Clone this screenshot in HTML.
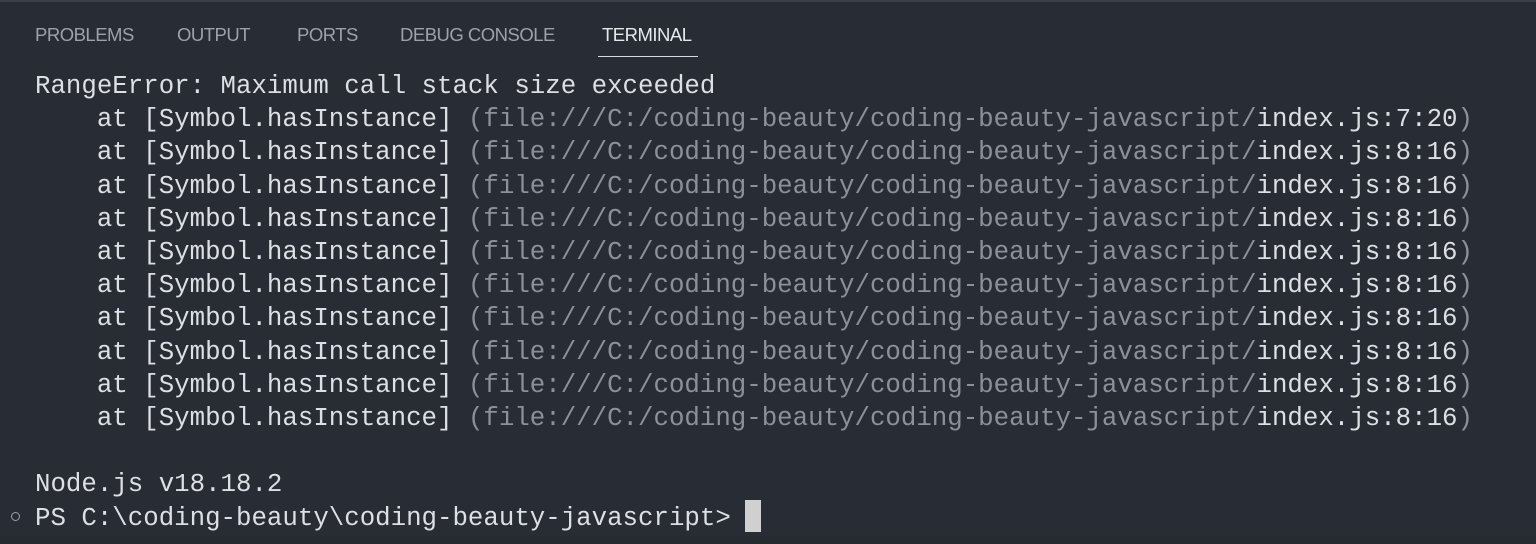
<!DOCTYPE html>
<html><head><style>
html,body{margin:0;padding:0;}
body{width:1536px;height:544px;background:#282c34;position:relative;overflow:hidden;}
.top{position:absolute;left:0;top:0;width:1536px;height:2px;background:#3a3f4a;}
.tabs{position:absolute;top:24px;left:35px;font-family:"Liberation Sans",sans-serif;font-size:18.5px;color:#9da1a9;letter-spacing:-0.5px;}
.tabs span{position:absolute;white-space:nowrap;}
.ul{position:absolute;left:598px;top:56px;width:100px;height:1px;background:#d7dae0;}
pre{position:absolute;left:35px;top:70px;margin:0;font-family:"Liberation Mono","DejaVu Sans Mono",monospace;font-size:25.78px;line-height:33.2px;color:#dcdfe4;}
.g{color:#8c9099;}
.cur{position:absolute;left:745px;top:500px;width:16px;height:32px;background:#d0d0d0;}
.dot{position:absolute;left:11px;top:512px;width:7px;height:7px;border:1.5px solid #9a9ea6;border-radius:50%;}
.bot{position:absolute;left:0;top:536px;width:1536px;height:8px;background:#262a31;}
</style></head><body>
<div class="top"></div>
<div class="tabs">
<span style="left:0">PROBLEMS</span>
<span style="left:142px">OUTPUT</span>
<span style="left:262px">PORTS</span>
<span style="left:365px">DEBUG CONSOLE</span>
<span style="left:567px;color:#e6e8ec">TERMINAL</span>
</div>
<div class="ul"></div>
<pre>RangeError: Maximum call stack size exceeded
    at [Symbol.hasInstance] <span class="g">(file:///C:/coding-beauty/coding-beauty-javascript/</span>index.js:7:20<span class="g">)</span>
    at [Symbol.hasInstance] <span class="g">(file:///C:/coding-beauty/coding-beauty-javascript/</span>index.js:8:16<span class="g">)</span>
    at [Symbol.hasInstance] <span class="g">(file:///C:/coding-beauty/coding-beauty-javascript/</span>index.js:8:16<span class="g">)</span>
    at [Symbol.hasInstance] <span class="g">(file:///C:/coding-beauty/coding-beauty-javascript/</span>index.js:8:16<span class="g">)</span>
    at [Symbol.hasInstance] <span class="g">(file:///C:/coding-beauty/coding-beauty-javascript/</span>index.js:8:16<span class="g">)</span>
    at [Symbol.hasInstance] <span class="g">(file:///C:/coding-beauty/coding-beauty-javascript/</span>index.js:8:16<span class="g">)</span>
    at [Symbol.hasInstance] <span class="g">(file:///C:/coding-beauty/coding-beauty-javascript/</span>index.js:8:16<span class="g">)</span>
    at [Symbol.hasInstance] <span class="g">(file:///C:/coding-beauty/coding-beauty-javascript/</span>index.js:8:16<span class="g">)</span>
    at [Symbol.hasInstance] <span class="g">(file:///C:/coding-beauty/coding-beauty-javascript/</span>index.js:8:16<span class="g">)</span>
    at [Symbol.hasInstance] <span class="g">(file:///C:/coding-beauty/coding-beauty-javascript/</span>index.js:8:16<span class="g">)</span>

Node.js v18.18.2
PS C:\coding-beauty\coding-beauty-javascript&gt; </pre>
<div class="dot"></div>
<div class="cur"></div>
<div class="bot"></div>
</body></html>
